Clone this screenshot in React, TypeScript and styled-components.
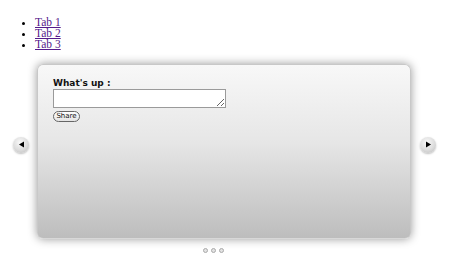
import styled, { createGlobalStyle } from "styled-components"

const Global = createGlobalStyle`
    body {
        margin: 0;
        background: #ffffff;
    }
`
const Page = styled.div`
    width: 474px;
    height: 269px;
    overflow: hidden;
`
const Tabs = styled.ul`
    margin: 17px 0 0 0;
    padding-left: 35px;
    font-family: "Liberation Serif", "Times New Roman", serif;
    font-size: 11.5px;
    line-height: 11px;
`
const TabLink = styled.a`
    color: #551a8b;
    text-decoration: underline;
`
const Slider = styled.div`
    display: flex;
    align-items: flex-start;
    margin-top: 13.5px;
    padding-left: 13px;
`
const Arrow = styled.button<{ $side: "left" | "right" }>`
    width: 16px;
    height: 16px;
    margin-top: 73px;
    margin-left: ${(p) => (p.$side === "right" ? "9px" : "0")};
    margin-right: ${(p) => (p.$side === "left" ? "8px" : "0")};
    padding: 0;
    border: 0;
    border-radius: 50%;
    background: radial-gradient(circle at 45% 35%, #fafafa 0%, #dcdcdc 55%, #b9b9b9 100%);
    box-shadow: 0 1px 2px rgba(0, 0, 0, 0.25);
    display: flex;
    align-items: center;
    justify-content: center;
    flex-shrink: 0;
`
const Panel = styled.div`
    width: 374px;
    height: 175px;
    box-sizing: border-box;
    padding: 13px 15px;
    border-radius: 6px;
    border: 1px solid #c8c8c8;
    border-bottom-color: #d8d8d8;
    background: linear-gradient(#f8f8f8 0%, #e6e6e6 45%, #bdbdbd 100%);
    box-shadow: 0 0 10px rgba(0, 0, 0, 0.4);
    font-family: "DejaVu Sans", "Liberation Sans", sans-serif;
`
const Label = styled.div`
    font-size: 9px;
    font-weight: bold;
    color: #111;
    line-height: 10px;
`
const Box = styled.textarea`
    display: block;
    width: 173px;
    height: 19px;
    box-sizing: border-box;
    margin: 1px 0 0 0;
    border: 1px solid #9a9a9a;
    background: #fff;
    padding: 1px;
    resize: both;
`
const ShareButton = styled.button`
    display: block;
    margin-top: 3px;
    height: 11px;
    width: 27px;
    padding: 0;
    border: 1px solid #666;
    border-radius: 6px;
    background: linear-gradient(#ffffff, #e4e4e4);
    font-family: "DejaVu Sans", "Liberation Sans", sans-serif;
    font-size: 7px;
    line-height: 9px;
    color: #111;
`
const Dots = styled.div`
    display: flex;
    gap: 3px;
    margin-top: 9px;
    padding-left: 203px;
`
const Dot = styled.span`
    width: 5px;
    height: 5px;
    box-sizing: border-box;
    border-radius: 50%;
    border: 1px solid #aaa;
    background: #e2e2e2;
`

function Triangle({ dir }: { dir: "left" | "right" }) {
    return (
        <svg width="7" height="7" viewBox="0 0 7 7">
            {dir === "left" ? (
                <polygon points="1,3.5 6,0.5 6,6.5" fill="#000" />
            ) : (
                <polygon points="6,3.5 1,0.5 1,6.5" fill="#000" />
            )}
        </svg>
    )
}

function App() {
    return (
        <Page>
            <Global />
            <Tabs>
                <li><TabLink href="#">Tab 1</TabLink></li>
                <li><TabLink href="#">Tab 2</TabLink></li>
                <li><TabLink href="#">Tab 3</TabLink></li>
            </Tabs>
            <Slider>
                <Arrow $side="left"><Triangle dir="left" /></Arrow>
                <Panel>
                    <Label>What's up :</Label>
                    <Box />
                    <ShareButton>Share</ShareButton>
                </Panel>
                <Arrow $side="right"><Triangle dir="right" /></Arrow>
            </Slider>
            <Dots>
                <Dot />
                <Dot />
                <Dot />
            </Dots>
        </Page>
    )
}

export default App
